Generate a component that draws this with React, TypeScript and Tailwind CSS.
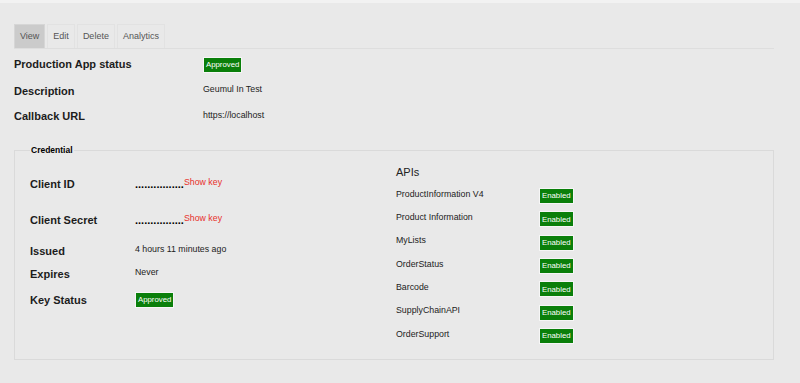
const tabs = ['View', 'Edit', 'Delete', 'Analytics'];

const apis = [
  'ProductInformation V4',
  'Product Information',
  'MyLists',
  'OrderStatus',
  'Barcode',
  'SupplyChainAPI',
  'OrderSupport',
];

function Badge({ children }: { children: React.ReactNode }) {
  return (
    <span className="inline-flex items-center h-[16px] px-[2px] bg-[#0a7f0a] border border-[#f6f6f6] text-white text-[7.8px] leading-none">
      {children}
    </span>
  );
}

function HiddenKey() {
  return (
    <div className="flex items-baseline">
      <span className="font-bold text-[11px] text-black">................</span>
      <span className="text-[8.8px] text-[#e8302a] relative -top-[3px]">Show key</span>
    </div>
  );
}

export default function App() {
  return (
    <div className="min-h-screen bg-[#e9e9e9] font-['Liberation_Sans',Arial,sans-serif] text-[#1c1c1c]">
      <div className="h-[3px] bg-[#f2f2f2]" />
      <div className="pl-[14px] pr-[26px] pt-[21px]">
        {/* Tabs */}
        <div className="flex gap-[2px] border-b border-[#dedede]">
          {tabs.map((t, i) => (
            <div
              key={t}
              className={
                i === 0
                  ? 'h-[24px] px-[5px] flex items-center text-[9px] text-[#555] bg-[#cbcbcb] border border-b-0 border-[#d6d6d6]'
                  : 'h-[24px] px-[5px] flex items-center text-[9px] text-[#555] border border-b-0 border-[#e2e2e2]'
              }
            >
              {t}
            </div>
          ))}
        </div>

        {/* App info */}
        <div className="mt-[3px]">
          <div className="flex items-center h-[25px]">
            <div className="w-[189px] font-bold text-[11px]">Production App status</div>
            <Badge>Approved</Badge>
          </div>
          <div className="flex items-center h-[26px]">
            <div className="w-[189px] font-bold text-[11px] mt-[2px]">Description</div>
            <div className="text-[8.8px] text-[#222]">Geumul In Test</div>
          </div>
          <div className="flex items-center h-[25px]">
            <div className="w-[189px] font-bold text-[11px] mt-[2px]">Callback URL</div>
            <div className="text-[8.8px] text-[#222]">https://localhost</div>
          </div>
        </div>

        {/* Credential */}
        <fieldset className="mt-[16px] border border-[#dadada] px-[15px] pb-[11px]">
          <legend className="px-[1px] text-[8.5px] font-bold leading-[12px] text-black">Credential</legend>
          <div className="flex pt-[10px]">
            <div className="w-[366px]">
              <div className="flex items-center h-[37px]">
                <div className="w-[105px] font-bold text-[11px]">Client ID</div>
                <HiddenKey />
              </div>
              <div className="flex items-center h-[35px]">
                <div className="w-[105px] font-bold text-[11px]">Client Secret</div>
                <HiddenKey />
              </div>
              <div className="flex items-center h-[26px]">
                <div className="w-[105px] font-bold text-[11px]">Issued</div>
                <div className="text-[8.8px] text-[#222] mb-[3px]">4 hours 11 minutes ago</div>
              </div>
              <div className="flex items-center h-[21px]">
                <div className="w-[105px] font-bold text-[11px]">Expires</div>
                <div className="text-[8.8px] text-[#222] mb-[3px]">Never</div>
              </div>
              <div className="flex items-center h-[30px]">
                <div className="w-[105px] font-bold text-[11px]">Key Status</div>
                <Badge>Approved</Badge>
              </div>
            </div>

            <div className="flex-1">
              <div className="h-[16px] flex items-center text-[11px] text-[#222] -mt-[2px]">APIs</div>
              <div className="mt-[4.5px]">
                {apis.map((a) => (
                  <div key={a} className="flex items-center h-[23.33px]">
                    <div className="w-[143px] text-[8.8px] text-[#222] mb-[4px]">{a}</div>
                    <Badge>Enabled</Badge>
                  </div>
                ))}
              </div>
            </div>
          </div>
        </fieldset>
      </div>
    </div>
  );
}
